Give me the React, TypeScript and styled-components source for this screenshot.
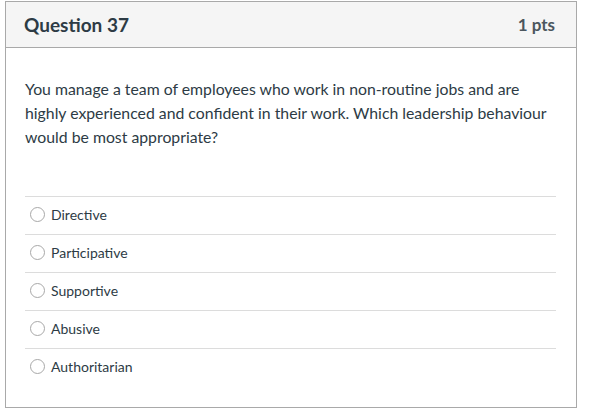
import React from "react";
import styled, { createGlobalStyle } from "styled-components";

const GlobalStyle = createGlobalStyle`
  body {
    margin: 0;
    background: #fff;
    font-family: Lato, "Liberation Sans", sans-serif;
    color: #2d3b45;
  }
`;

const answers = ["Directive", "Participative", "Supportive", "Abusive", "Authoritarian"];

export default function App() {
  return (
    <>
      <GlobalStyle />
      <Page>
        <Card>
          <Header>
            <Title>Question 37</Title>
            <Points>1 pts</Points>
          </Header>
          <Body>
            <QuestionText>
              You manage a team of employees who work in non-routine jobs and are
              highly experienced and confident in their work. Which leadership behaviour
              would be most appropriate?
            </QuestionText>
            <Answers>
              {answers.map((a) => (
                <AnswerRow key={a}>
                  <Radio type="radio" name="q37" />
                  <AnswerLabel>{a}</AnswerLabel>
                </AnswerRow>
              ))}
            </Answers>
          </Body>
        </Card>
      </Page>
    </>
  );
}

const Page = styled.div`
  padding: 1px 0 0 5px;
`;

const Card = styled.div`
  border: 1px solid #a9a9a9;
  box-sizing: border-box;
  width: 572px;
  height: 407px;
`;

const Header = styled.div`
  height: 45px;
  background: #f5f5f5;
  border-bottom: 1px solid #a9a9a9;
  display: flex;
  align-items: center;
  justify-content: space-between;
  padding: 0 21px 0 18px;
  box-sizing: content-box;
`;

const Title = styled.div`
  font-size: 19px;
  font-weight: 700;
  color: #2d3b45;
`;

const Points = styled.div`
  font-size: 17px;
  font-weight: 700;
  color: #4b565e;
`;

const Body = styled.div`
  padding: 29px 20px 0 19px;
`;

const QuestionText = styled.div`
  font-size: 15.8px;
  line-height: 24px;
  color: #2d3b45;
  margin-bottom: 47px;
`;

const Answers = styled.div`
  display: flex;
  flex-direction: column;
`;

const AnswerRow = styled.label`
  display: flex;
  align-items: center;
  height: 37px;
  box-sizing: border-box;
  height: 38px;
  padding: 0 0 3px 5px;
  border-top: 1px solid #dcdcdc;
`;

const Radio = styled.input`
  appearance: none;
  width: 15px;
  height: 15px;
  margin: 0 6px 0 0;
  border: 1px solid #a8a8a8;
  border-radius: 50%;
  background: #fff;
`;

const AnswerLabel = styled.span`
  font-size: 14px;
  color: #2d3b45;
`;
